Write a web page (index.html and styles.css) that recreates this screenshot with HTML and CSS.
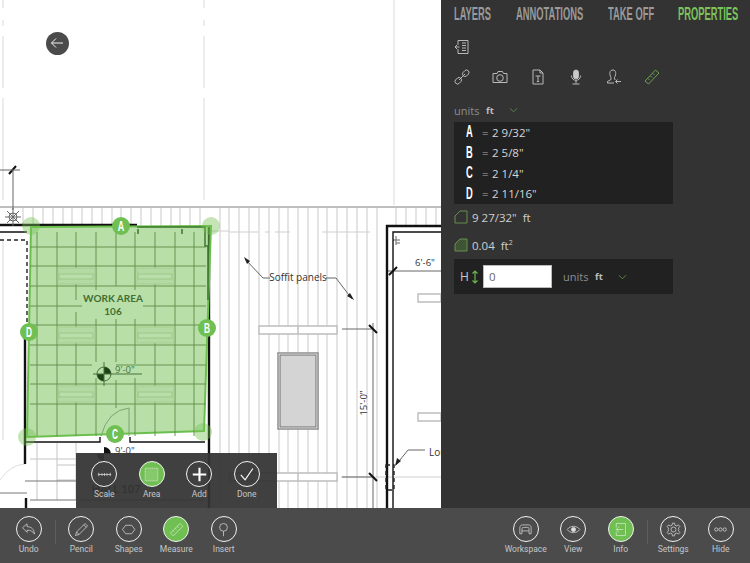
FILE: index.html
```html
<!DOCTYPE html>
<html lang="en">
<head>
<meta charset="utf-8">
<title>Properties</title>
<link rel="stylesheet" href="styles.css">
</head>
<body>
<div class="app">
  <div class="work">
    <main class="canvas">
      <svg class="plan" width="441" height="508" viewBox="0 0 441 508">
        <g class="faint">
          <path d="M3 0V8M3 20V26M3 36V88M204 0V8M204 20V26M204 36V88M3 98V200M204 98V200M394 0V205M3 240V440"/>
        </g>
        <g class="stripes">
          <path d="M23 208V226M33 208V226M43 208V226M53 208V226M63 208V226M72 208V226M82 208V226M92 208V226M102 208V226M112 208V226M121 208V226M131 208V226M141 208V226M151 208V226M161 208V226M171 208V226M180 208V226M190 208V226M200 208V226"/>
          <path d="M220 208V508M229 208V508M239 208V508M249 208V508M259 208V508M269 208V508M279 208V508M288 208V508M298 208V508M308 208V508M318 208V508M327 208V508M337 208V508M347 208V508M357 208V508M367 208V508M377 208V508M396 208V225M406 208V225M416 208V225M426 208V225M436 208V225"/>
        </g>
        <path class="roofline" d="M0 207H441"/>
        <path class="dash-light" d="M230 232H258M265 232H270M275 232H290M322 232H370M210 231H230M341 477H441"/>

        <g class="soffit">
          <path class="soffit-fill" d="M259 326H337V334H259ZM230 473H337V481H230ZM418 294H441V302H418ZM418 413H441V421H418Z"/>
          <path d="M298 326V334M298 473V481"/>
        </g>
        <rect class="skylight-outer" x="278" y="353" width="40" height="76"/>
        <rect class="skylight-inner" x="280" y="355" width="36" height="72"/>
        <g class="thin">
          <path d="M373 323V508M342 329H373M342 477H373M386 271H441M396 236V245M393 240H400M396 243H400"/>
          <path class="leader" d="M245 259L263 278H270M326 278H336L352 299M425 450H408L396 465"/>
        </g>
        <path class="arrowhead" d="M244 257L250 261L247 264ZM354 300L347 296L350 293ZM395 466L397 458L401 461Z"/>
        <path class="tick" d="M369 325L377 333M369 473L377 481M389 275L397 267M9 174L16 166"/>

        <g class="under">
          <path d="M37 443V500M57 443V500M76 443V500M30 459H76M57 465H76M57 480H76"/>
          <path class="heavy" d="M25 481H76M0 493H27M30 500H76M130 500H205M80 500H130"/>
          <path class="arc" d="M0 480Q10 465 25 464"/>
        </g>
        <g class="walls">
          <path class="w3" d="M387 508V226H441M25 335V464M209 227V508M0 225H137M26 498V508"/>
          <path class="w2" d="M393 508V232H441M0 232H27"/>
          <path class="w2" d="M26 442H100V437M130 437V442H205"/>
        </g>
        <path class="dash-dark" d="M0 240H27V322M386 465H394V490H386Z"/>
        <g class="thin">
          <path d="M0 170H20M13 170V210"/>
          <circle cx="13" cy="217" r="4"/>
          <path d="M13 208V226M5 217H21M7 211L19 223M19 211L7 223"/>
        </g>

        <polygon class="area" points="31,227 211,226 204,431 27,437"/>
        <g class="grid">
          <path d="M37 232V436M57 232V436M76 232V300M76 312V436M96 232V290M96 319V362M96 378V436M116 232V286M116 319V362M116 380V408M135 232V290M135 319V364M135 378V436M155 232V436M175 232V436M194 232V436"/>
          <path d="M30 247H206M30 266H206M30 286H206M30 325H206M30 345H206M30 365H92M116 365H206M30 384H206M30 404H206M30 306H82M143 306H206"/>
        </g>
        <g class="lights">
          <rect x="58" y="268" width="37" height="16"/>
          <rect class="strip" x="59" y="274" width="34" height="5"/>
          <rect x="137" y="268" width="37" height="16"/>
          <rect class="strip" x="138" y="274" width="34" height="5"/>
          <rect x="58" y="327" width="37" height="16"/>
          <rect class="strip" x="59" y="333" width="34" height="5"/>
          <rect x="137" y="327" width="37" height="16"/>
          <rect class="strip" x="138" y="333" width="34" height="5"/>
          <rect x="58" y="386" width="37" height="16"/>
          <rect class="strip" x="59" y="392" width="34" height="5"/>
          <rect x="137" y="386" width="37" height="16"/>
          <rect class="strip" x="138" y="392" width="34" height="5"/>
        </g>
        <path class="wall-green" d="M137 227H205V246H208V300M138 229V234M182 229V234"/>
        <text class="room" x="113" y="302">WORK AREA</text>
        <text class="room" x="113" y="315">106</text>

        <g class="elev">
          <circle cx="104" cy="374" r="7"/>
          <path class="elev-fill" d="M104 374V367A7 7 0 0 1 111 374ZM104 374V381A7 7 0 0 1 97 374Z"/>
          <path d="M93 374H142M104 362V386"/>
          <text class="elev-text" x="115" y="373">9'-0"</text>
        </g>
        <path class="door" d="M129 408V436M129 408Q108 410 101 436"/>
        <circle class="corner" cx="31" cy="226" r="9"/>
        <circle class="corner" cx="211" cy="226" r="9"/>
        <circle class="corner" cx="27" cy="437" r="9"/>
        <circle class="corner" cx="203" cy="432" r="9"/>
        <g class="handle">
          <circle cx="121" cy="226" r="9"/><text x="121" y="231" textLength="6.500" lengthAdjust="spacingAndGlyphs">A</text>
          <circle cx="207" cy="328" r="9"/><text x="207" y="333" textLength="6" lengthAdjust="spacingAndGlyphs">B</text>
          <circle cx="115" cy="434" r="9"/><text x="115" y="439" textLength="6" lengthAdjust="spacingAndGlyphs">C</text>
          <circle cx="29" cy="332" r="9"/><text x="29" y="337" textLength="6" lengthAdjust="spacingAndGlyphs">D</text>
        </g>
        <g class="elev dark">
          <path class="elev-fill" d="M104 454V447A7 7 0 0 1 111 454ZM104 454V461A7 7 0 0 1 97 454Z"/>
          <text class="elev-text" x="115" y="454">9'-0"</text>
        </g>
        <text class="hall" x="116" y="493">HALL 107</text>
        <text class="note" x="298" y="281">Soffit panels</text>
        <text class="note small" x="425" y="266">6'-6"</text>
        <text class="note small" transform="translate(367 403) rotate(-90)">15'-0"</text>
        <text class="note lou" x="429" y="456">Lou</text>
      </svg>

      <button class="back" aria-label="Back">
        <svg width="16" height="16" viewBox="0 0 16 16"><path d="M14 8H2.500M7 3.500L2.500 8L7 12.500"/></svg>
      </button>

      <div class="popup">
        <div class="tool">
          <span class="ring"><svg viewBox="0 0 24 24"><path d="M2.500 12H21.500M4 9.500V14.500M8.500 10V14M12 10V14M15.500 10V14M20 9.500V14.500"/></svg></span>
          <span class="lbl">Scale</span>
        </div>
        <div class="tool">
          <span class="ring on"><svg viewBox="0 0 24 24"><rect class="sq-fill" x="3" y="3" width="18" height="18"/></svg></span>
          <span class="lbl">Area</span>
        </div>
        <div class="tool">
          <span class="ring"><svg viewBox="0 0 24 24"><path class="bold" d="M12 2.500V21.500M2.500 12H21.500"/></svg></span>
          <span class="lbl">Add</span>
        </div>
        <div class="tool">
          <span class="ring"><svg viewBox="0 0 24 24"><path class="mid" d="M4 12.500L10 19.500L21 3.500"/></svg></span>
          <span class="lbl">Done</span>
        </div>
      </div>
    </main>

    <aside class="panel">
      <nav class="tabs">
        <span class="tab"><span class="narrow">LAYERS</span></span>
        <span class="tab"><span class="narrow">ANNOTATIONS</span></span>
        <span class="tab"><span class="narrow">TAKE OFF</span></span>
        <span class="tab active"><span class="narrow">PROPERTIES</span></span>
      </nav>
      <div class="icon-row first">
        <svg class="pi" viewBox="0 0 16 16"><path d="M4 1.500H14V14.500H4V10M4 6V1.500M8 4H12M8 6.500H12M8 9H12M8 11.500H12M5.500 8H1M3 6L1 8L3 10"/></svg>
      </div>
      <div class="icon-row">
        <svg class="pi" viewBox="0 0 16 16"><path d="M9 3.500L11 1.500A2.500 2.500 0 0 1 14.500 5L12.500 7A2.500 2.500 0 0 1 9 3.500ZM3.500 9L1.500 11A2.500 2.500 0 0 0 5 14.500L7 12.500A2.500 2.500 0 0 0 3.500 9ZM5 11L11 5"/></svg>
        <svg class="pi" viewBox="0 0 16 16"><path d="M1 4.500H5L6 2.500H10.500L11.500 4.500H15V13.500H1Z"/><circle cx="8" cy="9" r="3.300"/></svg>
        <svg class="pi" viewBox="0 0 16 16"><path d="M3 1H10L13 4V15H3ZM10 1V4H13M5.500 7H10.500M8 7V12.500M6.800 12.500H9.200"/></svg>
        <svg class="pi" viewBox="0 0 16 16"><rect class="pi-fill" x="5.500" y="1" width="5" height="9" rx="2.500"/><path d="M3.500 6.500C3.500 13 12.500 13 12.500 6.500M8 11.500V14.500M4.500 15H11.500"/></svg>
        <svg class="pi" viewBox="0 0 16 16"><path d="M5 8.500C3 5 3.500 1 7 1C10 1 10.500 5 8.500 8.500V10L9.500 11M5 8.500V10.500L1.500 12.500V14H8M15 12.500H9.500M11.500 10.500L9.500 12.500L11.500 14.500"/></svg>
        <svg class="pi green" viewBox="0 0 16 16"><path d="M11.500 1L15 4L4.500 15L1 12ZM4 9.500L5.500 11M6.500 7L8 8.500M9 4.500L10.500 6"/></svg>
      </div>
      <div class="units top">
        <span class="u-label">units</span>
        <span class="u-val">ft</span>
        <svg class="chev" viewBox="0 0 10 6"><path d="M1 1L5 5L9 1"/></svg>
      </div>
      <div class="measures">
        <div class="m-row"><b class="m-key"><span class="narrow-key">A</span></b><span class="m-eq">=</span><span>2 9/32"</span></div>
        <div class="m-row"><b class="m-key"><span class="narrow-key">B</span></b><span class="m-eq">=</span><span>2 5/8"</span></div>
        <div class="m-row"><b class="m-key"><span class="narrow-key">C</span></b><span class="m-eq">=</span><span>2 1/4"</span></div>
        <div class="m-row"><b class="m-key"><span class="narrow-key">D</span></b><span class="m-eq">=</span><span>2 11/16"</span></div>
      </div>
      <div class="stat">
        <svg class="shape" viewBox="0 0 14 14"><path d="M1 13V6L6 1H13V13Z"/></svg>
        <span>9 27/32"&nbsp;&nbsp;ft</span>
      </div>
      <div class="stat second">
        <svg class="shape filled" viewBox="0 0 14 14"><path d="M1 13V6L6 1H13V13Z"/></svg>
        <span>0.04&nbsp;&nbsp;ft<sup>2</sup></span>
      </div>
      <div class="height">
        <span class="h-key">H</span>
        <svg class="h-arrow" viewBox="0 0 8 14"><path d="M4 1V13M1.500 3.500L4 1L6.500 3.500M1.500 10.500L4 13L6.500 10.500"/></svg>
        <input class="h-input" value="0" aria-label="Height">
        <span class="u-label">units</span>
        <span class="u-val">ft</span>
        <svg class="chev" viewBox="0 0 10 6"><path d="M1 1L5 5L9 1"/></svg>
      </div>
    </aside>
  </div>

  <footer class="bar">
    <div class="group">
      <div class="tool"><span class="ring"><svg viewBox="0 0 24 24"><path d="M3.500 9.500L10 4V8C16 8 20 11.500 20.500 18.500C18 14.500 15 13 10 13V16Z"/></svg></span><span class="lbl">Undo</span></div>
      <i class="sep"></i>
      <div class="tool"><span class="ring"><svg viewBox="0 0 24 24"><path d="M17 3.500L20.500 7L8.500 19L3.500 20.500L5 15.500ZM15 5.500L18.500 9M5 15.500L8.500 19"/></svg></span><span class="lbl">Pencil</span></div>
      <div class="tool"><span class="ring"><svg viewBox="0 0 24 24"><path d="M8 6H16.500L21 12L16.500 18H8L3.500 12Z"/></svg></span><span class="lbl">Shapes</span></div>
      <div class="tool"><span class="ring on"><svg viewBox="0 0 24 24"><path d="M17 3.500L21 7.500L7.500 21L3.500 17ZM7 13.500L9 15.500M10 10.500L12 12.500M13 7.500L15 9.500"/></svg></span><span class="lbl">Measure</span></div>
      <div class="tool"><span class="ring"><svg viewBox="0 0 24 24"><circle cx="12" cy="9" r="5.500"/><path d="M12 14.500V21.500"/></svg></span><span class="lbl">Insert</span></div>
    </div>
    <div class="group">
      <div class="tool"><span class="ring"><svg viewBox="0 0 24 24"><path d="M4 18V10C4 6.500 6 5.500 8 5.500H16C18 5.500 20 6.500 20 10V18H17V11C17 9.500 16 9 15 9H9C8 9 7 9.500 7 11V18ZM7 14H17"/></svg></span><span class="lbl">Workspace</span></div>
      <div class="tool"><span class="ring"><svg viewBox="0 0 24 24"><path d="M3 12C7.500 6 16.500 6 21 12C16.500 18 7.500 18 3 12Z"/><circle class="solid" cx="12" cy="12" r="3"/></svg></span><span class="lbl">View</span></div>
      <div class="tool"><span class="ring on"><svg viewBox="0 0 24 24"><path d="M6 3.500H19V20.500H6V15M6 9V3.500M16 12H6M10 8L6 12L10 16"/></svg></span><span class="lbl">Info</span></div>
      <i class="sep"></i>
      <div class="tool"><span class="ring"><svg viewBox="0 0 24 24"><circle cx="12" cy="12" r="3.500"/><path d="M10.500 3H13.500L14 6L16.500 7L19 5.500L21 8L19 10L19.500 12L19 14L21 16L19 18.500L16.500 17L14 18L13.500 21H10.500L10 18L7.500 17L5 18.500L3 16L5 14L4.500 12L5 10L3 8L5 5.500L7.500 7L10 6Z"/></svg></span><span class="lbl">Settings</span></div>
      <div class="tool"><span class="ring"><svg viewBox="0 0 24 24"><circle cx="6" cy="12" r="2.300"/><circle cx="12" cy="12" r="2.300"/><circle cx="18" cy="12" r="2.300"/></svg></span><span class="lbl">Hide</span></div>
    </div>
  </footer>
</div>
</body>
</html>
```
FILE: styles.css
```css
* { box-sizing: border-box; }
html, body { margin: 0; padding: 0; }
body { width: 750px; height: 563px; overflow: hidden; background: #fff; font-family: "Open Sans", "Noto Sans", sans-serif; }
.app { display: flex; flex-direction: column; width: 750px; height: 563px; }
.work { display: flex; height: 508px; }

/* Drawing */
.canvas { position: relative; width: 441px; height: 508px; background: #fff; overflow: hidden; }
.plan { display: block; fill: none; }
.faint path { stroke: #e6e6e6; stroke-width: 1.5; }
.stripes path { stroke: #d2d2d2; stroke-width: 1.2; }
.roofline { stroke: #a9a9a9; stroke-width: 1.5; }
.dash-light { stroke: #cfcfcf; stroke-width: 1; }
.soffit path { stroke: #bdbdbd; stroke-width: 1.4; }
.soffit-fill { fill: #fff; }
.skylight-outer { fill: #fff; stroke: #8d8d8d; stroke-width: 1.5; }
.skylight-inner { fill: #d4d4d4; stroke: #6d6d6d; stroke-width: 1; }
.thin path, .thin circle { stroke: #666; stroke-width: 1; }
.thin .leader { stroke: #666; }
.arrowhead { fill: #222; }
.tick { stroke: #111; stroke-width: 2; }
.under path { stroke: #c4c4c4; stroke-width: 1; }
.under .heavy { stroke: #777; }
.under .arc { stroke: #ddd; }
.walls path { stroke: #111; fill: none; }
.w3 { stroke-width: 2.4; }
.w2 { stroke-width: 1.4; }
.dash-dark { stroke: #222; stroke-width: 1.4; stroke-dasharray: 4 3; }
.area { fill: rgba(116, 192, 84, .5); stroke: #6cbf4e; stroke-width: 2; }
.grid path { stroke: #67924f; stroke-width: 1; }
.lights rect { fill: #b4daa3; stroke: #a3cd91; stroke-width: 1; }
.lights .strip { fill: #b9deaa; stroke: #9ac788; }
.wall-green { stroke: #3b7a2c; stroke-width: 1.5; }
.room { font-family: "Lato", "Open Sans", sans-serif; font-weight: 700; font-size: 10px; fill: #3f6f31; text-anchor: middle; }
.elev circle { fill: none; stroke: #47703a; stroke-width: 1; }
.elev path { stroke: #47703a; stroke-width: 1; }
.elev .elev-fill { fill: #1e4016; stroke: none; }
.elev.dark .elev-fill { fill: #111; }
.elev-text { font-family: "Open Sans", sans-serif; font-size: 9.5px; fill: #4b7540; }
.elev.dark .elev-text { fill: #444; }
.door { stroke: #7ea36e; stroke-width: 1; }
.corner { fill: rgba(116, 192, 84, .42); }
.handle circle { fill: #6fbf52; }
.handle text { font-family: "Liberation Sans", sans-serif; font-weight: 700; font-size: 14px; fill: #fff; text-anchor: middle; }
.hall { font-family: "Lato", sans-serif; font-weight: 700; font-size: 11px; fill: #262626; text-anchor: middle; }
.note { font-family: "Open Sans", sans-serif; font-size: 10px; fill: #333; text-anchor: middle; }
.note.small { font-size: 9.5px; }
.note.lou { text-anchor: start; }

.back { position: absolute; left: 45.500px; top: 31.500px; width: 23px; height: 23px; padding: 0; border: 0; border-radius: 50%; background: #4b4b4b; display: flex; align-items: center; justify-content: center; }
.back path { fill: none; stroke: #f2f2f2; stroke-width: 1; }

.popup { position: absolute; left: 76px; top: 453px; width: 201px; height: 55px; padding-left: 4.500px; background: rgba(52, 52, 52, .94); display: flex; }

/* Tools */
.tool { width: 47.500px; flex: none; display: flex; flex-direction: column; align-items: center; padding-top: 8px; }
.ring { width: 26px; height: 26px; border: 1.500px solid #f2f2f2; border-radius: 50%; display: flex; align-items: center; justify-content: center; flex: none; }
.ring svg { width: 17px; height: 17px; fill: none; stroke: #dedede; stroke-width: 1; }
.ring.on { background: #6fbf52; }
.ring.on svg { stroke: #d8eccf; }
.ring .bold { stroke: #fff; stroke-width: 3; }
.ring .mid { stroke: #fff; stroke-width: 1.600; }
.ring .solid { fill: #dedede; }
.sq-fill { fill: rgba(255, 255, 255, .16); stroke-dasharray: 2 1; }
.lbl { margin-top: 2px; font-family: "Roboto", sans-serif; font-size: 8.500px; line-height: 11px; color: #c6c6c6; white-space: nowrap; }

.bar { height: 55px; background: #4b4b4b; display: flex; justify-content: space-between; padding: 0 5.500px 0 5px; }
.group { display: flex; }
.sep { width: 1px; height: 24px; margin: 12px 2px 0 2px; background: #5e5e5e; flex: none; }

/* Panel */
.panel { width: 309px; background: #333; padding: 0 0 0 13px; color: #ccc; }
.tabs { display: grid; grid-template-columns: 62px 92px 70px 60px; height: 29px; align-items: center; font-family: "Liberation Sans", sans-serif; font-weight: 700; font-size: 18px; color: #9a9a9a; }
.tab { white-space: nowrap; overflow: visible; min-width: 0; }
.narrow { display: inline-block; transform: scaleX(.52); transform-origin: left center; }
.tab.active { color: #7cc35c; }
.icon-row { display: flex; gap: 22px; height: 16px; }
.icon-row.first { margin-top: 10px; }
.icon-row + .icon-row { margin-top: 14px; }
.pi { width: 16px; height: 16px; fill: none; stroke: #b9b9b9; stroke-width: 1; flex: none; }
.pi.green { stroke: #6aa24e; }
.pi-fill { fill: #c9c9c9; }
.units { display: flex; align-items: center; height: 16px; margin-top: 17px; }
.u-label { font-size: 11px; color: #8d8d8d; width: 32px; flex: none; }
.u-val { font-size: 9.500px; font-weight: 700; color: #bdbdbd; width: 23px; flex: none; }
.chev { width: 9px; height: 6px; fill: none; stroke: #5c8f45; stroke-width: 1; }
.measures { width: 219px; height: 82px; margin-top: 4px; background: #212121; padding: 0 0 0 12px; }
.m-row { display: flex; align-items: center; height: 20.500px; font-size: 11.500px; color: #d6d6d6; }
.m-key { width: 16px; flex: none; font-family: "Liberation Sans", sans-serif; font-size: 17px; color: #fff; }
.narrow-key { display: inline-block; transform: scaleX(.55); transform-origin: left center; }
.m-eq { width: 10px; color: #aaa; flex: none; }
.stat { display: flex; align-items: center; gap: 4px; height: 16px; margin-top: 5px; font-size: 11.500px; color: #cfcfcf; }
.stat.second { margin-top: 12px; }
.stat sup { font-size: 7px; line-height: 0; }
.shape { width: 14px; height: 14px; fill: none; stroke: #69904f; stroke-width: 1; }
.shape.filled { fill: #3f5435; }
.height { display: flex; align-items: center; width: 219px; height: 35px; margin-top: 6px; background: #212121; padding-left: 6px; }
.h-key { font-size: 12px; color: #c9c9c9; width: 11px; flex: none; }
.h-arrow { width: 8px; height: 14px; fill: none; stroke: #6cb54d; stroke-width: 1.200; flex: none; }
.h-input { width: 69px; height: 23px; margin: 0 11px 0 4px; padding: 0 5px; border: 1px solid #bbb; background: #fff; font: 11.500px "Open Sans", sans-serif; color: #666; flex: none; }
```
